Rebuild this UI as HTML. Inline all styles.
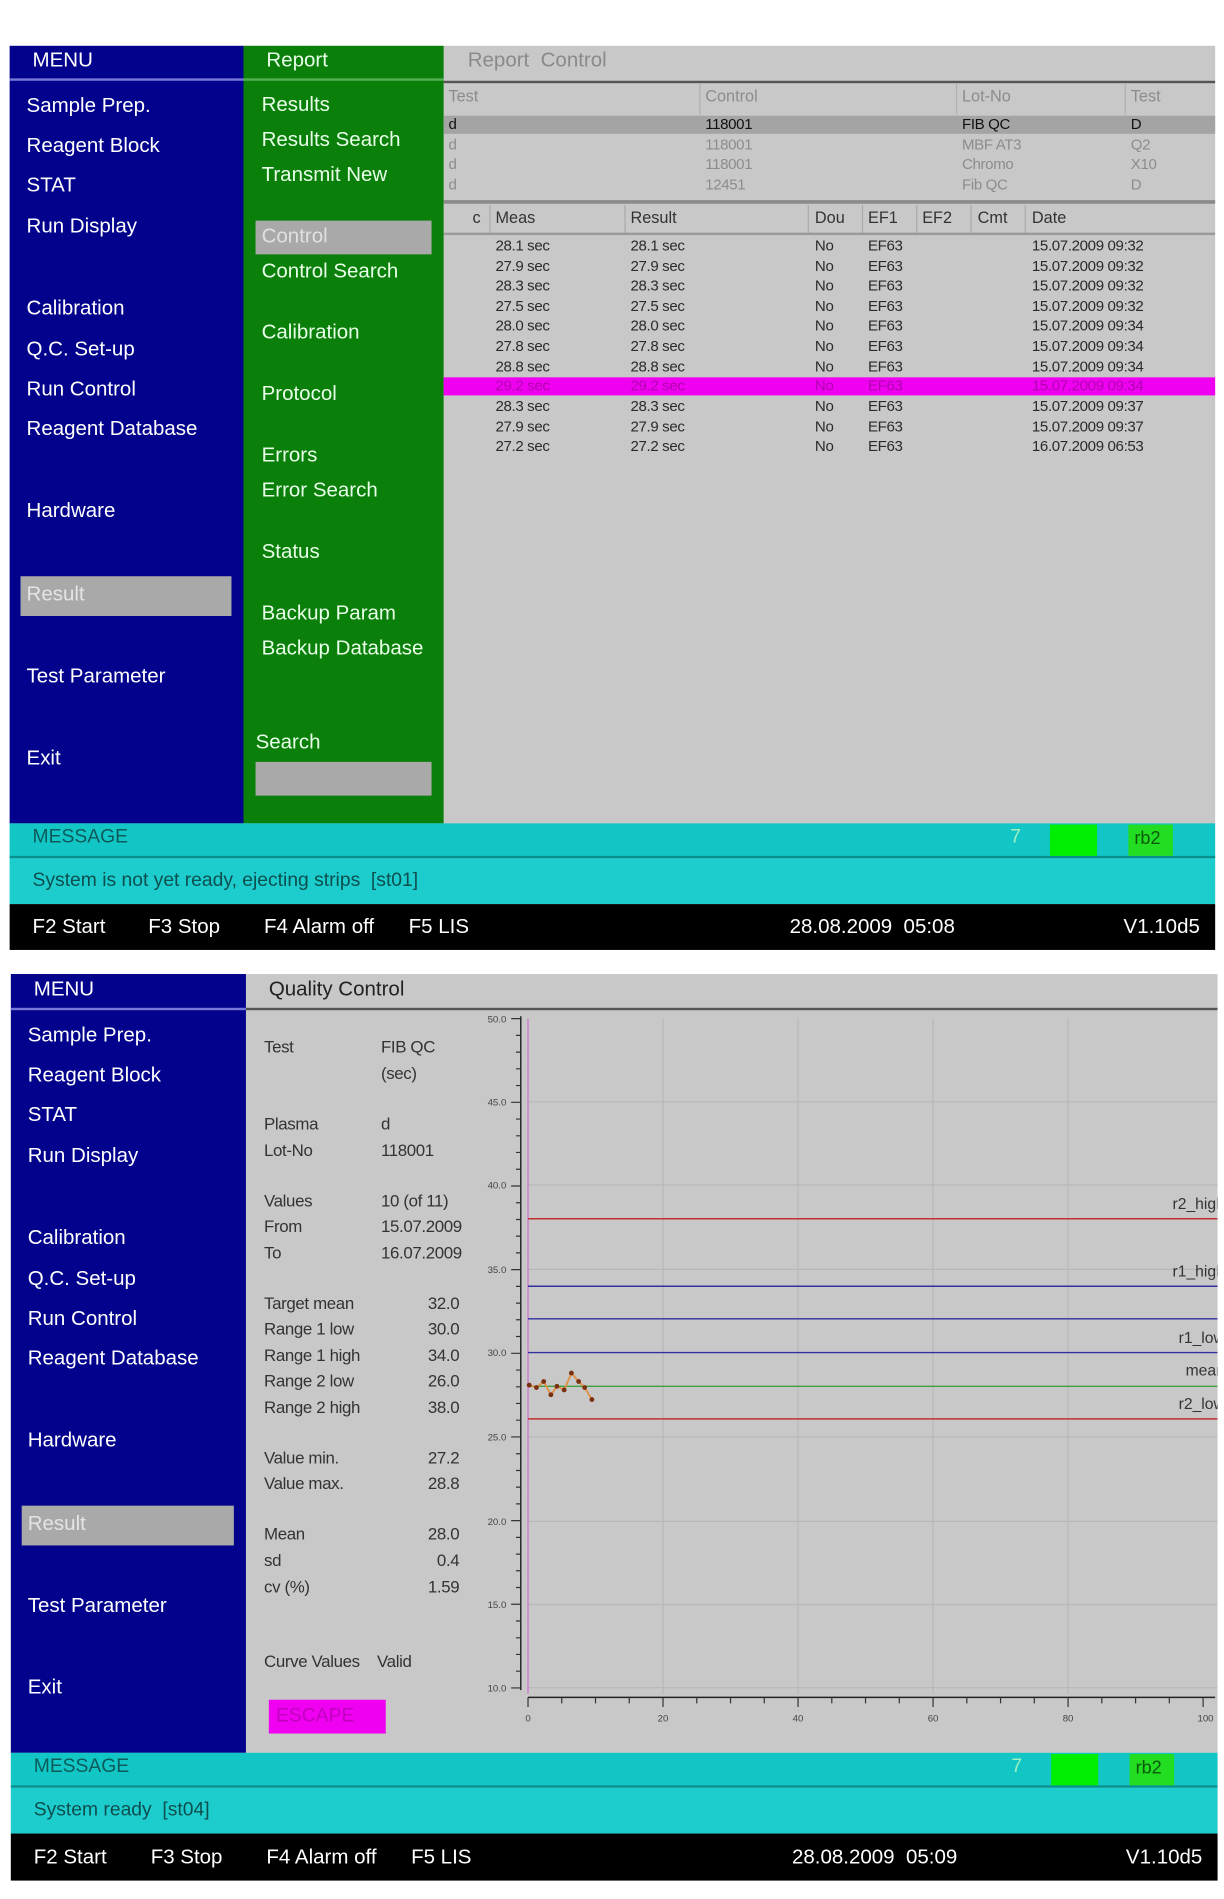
<!DOCTYPE html>
<html><head><meta charset="utf-8">
<style>
html,body{margin:0;padding:0;background:#fff;width:1224px;height:1889px;overflow:hidden}
#w{position:absolute;left:0;top:0;width:1020px;height:1575px;transform:scale(1.2055);transform-origin:0 0;font-family:"Liberation Sans",sans-serif}
.a{position:absolute}
.t{position:absolute;white-space:nowrap;line-height:20px}
.m{font-size:17px;color:#fff}
.g{font-size:17px;color:#e8ffe8}
.s{font-size:12.5px;color:#2a2a2a;line-height:16px;letter-spacing:-0.3px}
.h{font-size:13.5px;color:#333;line-height:16px}
.i{font-size:14px;color:#333;line-height:18px;letter-spacing:-0.3px}
.gr{color:#8c8c8c}
.sel{background:#a9a9a9}
.pk{color:#b000b0 !important}
</style></head><body><div id="w">

<!-- TOP SCREEN -->
<div class="a" style="left:8px;top:38px;width:1000px;height:750px;background:#c8c8c8"></div>
<div class="a" style="left:8px;top:38px;width:194px;height:645px;background:#02028c"></div>
<div class="a" style="left:202px;top:38px;width:166px;height:645px;background:#0a7f0a"></div>
<div class="a" style="left:8px;top:65px;width:194px;height:2px;background:#7878d8"></div>
<div class="a" style="left:202px;top:65px;width:166px;height:2px;background:#52b052"></div>
<div class="a" style="left:368px;top:67px;width:640px;height:2px;background:#555"></div>
<div class="t m" style="left:27px;top:40px">MENU</div>
<div class="t g" style="left:221px;top:40px">Report</div>
<div class="t" style="left:388px;top:40px;font-size:17px;color:#8a8a8a">Report&nbsp; Control</div>

<div class="t m" style="left:22px;top:78px">Sample Prep.</div>
<div class="t m" style="left:22px;top:111px">Reagent Block</div>
<div class="t m" style="left:22px;top:144px">STAT</div>
<div class="t m" style="left:22px;top:178px">Run Display</div>
<div class="t m" style="left:22px;top:246px">Calibration</div>
<div class="t m" style="left:22px;top:280px">Q.C. Set-up</div>
<div class="t m" style="left:22px;top:313px">Run Control</div>
<div class="t m" style="left:22px;top:346px">Reagent Database</div>
<div class="t m" style="left:22px;top:414px">Hardware</div>
<div class="a sel" style="left:17px;top:478px;width:175px;height:33px"></div>
<div class="t m" style="left:22px;top:483px;color:#e4e4e4">Result</div>
<div class="t m" style="left:22px;top:551px">Test Parameter</div>
<div class="t m" style="left:22px;top:619px">Exit</div>

<div class="t g" style="left:217px;top:77px">Results</div>
<div class="t g" style="left:217px;top:106px">Results Search</div>
<div class="t g" style="left:217px;top:135px">Transmit New</div>
<div class="a sel" style="left:212px;top:183px;width:146px;height:28px"></div>
<div class="t g" style="left:217px;top:186px;color:#e0e0e0">Control</div>
<div class="t g" style="left:217px;top:215px">Control Search</div>
<div class="t g" style="left:217px;top:266px">Calibration</div>
<div class="t g" style="left:217px;top:317px">Protocol</div>
<div class="t g" style="left:217px;top:368px">Errors</div>
<div class="t g" style="left:217px;top:397px">Error Search</div>
<div class="t g" style="left:217px;top:448px">Status</div>
<div class="t g" style="left:217px;top:499px">Backup Param</div>
<div class="t g" style="left:217px;top:528px">Backup Database</div>
<div class="t g" style="left:212px;top:606px">Search</div>
<div class="a sel" style="left:212px;top:632px;width:146px;height:28px"></div>

<!-- table 1 -->
<div class="t h gr" style="left:372px;top:72px">Test</div>
<div class="t h gr" style="left:585px;top:72px">Control</div>
<div class="t h gr" style="left:798px;top:72px">Lot-No</div>
<div class="t h gr" style="left:938px;top:72px">Test</div>
<div class="a" style="left:580px;top:69px;width:1px;height:26px;background:#b0b0b0"></div>
<div class="a" style="left:793px;top:69px;width:1px;height:26px;background:#b0b0b0"></div>
<div class="a" style="left:933px;top:69px;width:1px;height:26px;background:#b0b0b0"></div>
<div class="a" style="left:368px;top:96px;width:640px;height:15px;background:#a4a4a4"></div>
<div class="t s" style="left:372px;top:95px;color:#111">d</div><div class="t s" style="left:585px;top:95px;color:#111">118001</div><div class="t s" style="left:798px;top:95px;color:#111">FIB QC</div><div class="t s" style="left:938px;top:95px;color:#111">D</div>
<div class="t s gr" style="left:372px;top:112px">d</div><div class="t s gr" style="left:585px;top:112px">118001</div><div class="t s gr" style="left:798px;top:112px">MBF AT3</div><div class="t s gr" style="left:938px;top:112px">Q2</div>
<div class="t s gr" style="left:372px;top:128px">d</div><div class="t s gr" style="left:585px;top:128px">118001</div><div class="t s gr" style="left:798px;top:128px">Chromo</div><div class="t s gr" style="left:938px;top:128px">X10</div>
<div class="t s gr" style="left:372px;top:145px">d</div><div class="t s gr" style="left:585px;top:145px">12451</div><div class="t s gr" style="left:798px;top:145px">Fib QC</div><div class="t s gr" style="left:938px;top:145px">D</div>
<div class="a" style="left:368px;top:166px;width:640px;height:3px;background:#8a8a8a"></div>
<!-- table 2 -->
<div class="t h" style="left:392px;top:173px">c</div>
<div class="t h" style="left:411px;top:173px">Meas</div>
<div class="t h" style="left:523px;top:173px">Result</div>
<div class="t h" style="left:676px;top:173px">Dou</div>
<div class="t h" style="left:720px;top:173px">EF1</div>
<div class="t h" style="left:765px;top:173px">EF2</div>
<div class="t h" style="left:811px;top:173px">Cmt</div>
<div class="t h" style="left:856px;top:173px">Date</div>
<div class="a" style="left:406px;top:170px;width:1px;height:24px;background:#aaa"></div>
<div class="a" style="left:518px;top:170px;width:1px;height:24px;background:#aaa"></div>
<div class="a" style="left:670px;top:170px;width:1px;height:24px;background:#aaa"></div>
<div class="a" style="left:715px;top:170px;width:1px;height:24px;background:#aaa"></div>
<div class="a" style="left:760px;top:170px;width:1px;height:24px;background:#aaa"></div>
<div class="a" style="left:805px;top:170px;width:1px;height:24px;background:#aaa"></div>
<div class="a" style="left:850px;top:170px;width:1px;height:24px;background:#aaa"></div>
<div class="a" style="left:368px;top:193px;width:640px;height:2px;background:#9a9a9a"></div>
<div class="a" style="left:368px;top:313px;width:640px;height:15px;background:#f000f0"></div>

<!-- message top -->
<div class="a" style="left:8px;top:683px;width:1000px;height:29px;background:#12c6c6"></div>
<div class="a" style="left:8px;top:710px;width:1000px;height:2px;background:#0a8f8f"></div>
<div class="a" style="left:8px;top:712px;width:1000px;height:38px;background:#1dcccc"></div>
<div class="a" style="left:8px;top:750px;width:1000px;height:38px;background:#000"></div>
<div class="t" style="left:27px;top:685px;font-size:16px;color:#0d5a5a">MESSAGE</div>
<div class="t" style="left:838px;top:685px;font-size:16px;color:#9df0c0">7</div>
<div class="a" style="left:871px;top:684px;width:39px;height:26px;background:#00ee00"></div>
<div class="a" style="left:936px;top:684px;width:37px;height:26px;background:#22dd22"></div>
<div class="t" style="left:941px;top:686px;font-size:15px;color:#0a5a0a">rb2</div>
<div class="t" style="left:27px;top:721px;font-size:16px;color:#0d4f4f">System is not yet ready, ejecting strips&nbsp; [st01]</div>
<div class="t" style="left:27px;top:759px;font-size:17px;color:#fff">F2 Start</div>
<div class="t" style="left:123px;top:759px;font-size:17px;color:#fff">F3 Stop</div>
<div class="t" style="left:219px;top:759px;font-size:17px;color:#fff">F4 Alarm off</div>
<div class="t" style="left:339px;top:759px;font-size:17px;color:#fff">F5 LIS</div>
<div class="t" style="left:655px;top:759px;font-size:17px;color:#fff">28.08.2009&nbsp; 05:08</div>
<div class="t" style="left:932px;top:759px;font-size:17px;color:#fff">V1.10d5</div>

<!-- BOTTOM SCREEN -->
<div class="a" style="left:9px;top:808px;width:1001px;height:752px;background:#c8c8c8"></div>
<div class="a" style="left:9px;top:808px;width:195px;height:646px;background:#02028c"></div>
<div class="a" style="left:9px;top:836px;width:195px;height:2px;background:#7878d8"></div>
<div class="a" style="left:204px;top:836px;width:806px;height:2px;background:#555"></div>
<div class="t m" style="left:28px;top:811px">MENU</div>
<div class="t" style="left:223px;top:811px;font-size:17px;color:#222">Quality Control</div>

<div class="t m" style="left:23px;top:849px">Sample Prep.</div>
<div class="t m" style="left:23px;top:882px">Reagent Block</div>
<div class="t m" style="left:23px;top:915px">STAT</div>
<div class="t m" style="left:23px;top:949px">Run Display</div>
<div class="t m" style="left:23px;top:1017px">Calibration</div>
<div class="t m" style="left:23px;top:1051px">Q.C. Set-up</div>
<div class="t m" style="left:23px;top:1084px">Run Control</div>
<div class="t m" style="left:23px;top:1117px">Reagent Database</div>
<div class="t m" style="left:23px;top:1185px">Hardware</div>
<div class="a sel" style="left:18px;top:1249px;width:176px;height:33px"></div>
<div class="t m" style="left:23px;top:1254px;color:#e4e4e4">Result</div>
<div class="t m" style="left:23px;top:1322px">Test Parameter</div>
<div class="t m" style="left:23px;top:1390px">Exit</div>

<div class="t i" style="left:219px;top:859px">Test</div><div class="t i" style="left:316px;top:859px">FIB QC</div>
<div class="t i" style="left:316px;top:881px">(sec)</div>
<div class="t i" style="left:219px;top:923px">Plasma</div><div class="t i" style="left:316px;top:923px">d</div>
<div class="t i" style="left:219px;top:945px">Lot-No</div><div class="t i" style="left:316px;top:945px">118001</div>
<div class="t i" style="left:219px;top:987px">Values</div><div class="t i" style="left:316px;top:987px">10 (of 11)</div>
<div class="t i" style="left:219px;top:1008px">From</div><div class="t i" style="left:316px;top:1008px">15.07.2009</div>
<div class="t i" style="left:219px;top:1030px">To</div><div class="t i" style="left:316px;top:1030px">16.07.2009</div>
<div class="t i" style="left:219px;top:1072px">Target mean</div><div class="t i" style="right:639px;top:1072px">32.0</div>
<div class="t i" style="left:219px;top:1093px">Range 1 low</div><div class="t i" style="right:639px;top:1093px">30.0</div>
<div class="t i" style="left:219px;top:1115px">Range 1 high</div><div class="t i" style="right:639px;top:1115px">34.0</div>
<div class="t i" style="left:219px;top:1136px">Range 2 low</div><div class="t i" style="right:639px;top:1136px">26.0</div>
<div class="t i" style="left:219px;top:1158px">Range 2 high</div><div class="t i" style="right:639px;top:1158px">38.0</div>
<div class="t i" style="left:219px;top:1200px">Value min.</div><div class="t i" style="right:639px;top:1200px">27.2</div>
<div class="t i" style="left:219px;top:1221px">Value max.</div><div class="t i" style="right:639px;top:1221px">28.8</div>
<div class="t i" style="left:219px;top:1263px">Mean</div><div class="t i" style="right:639px;top:1263px">28.0</div>
<div class="t i" style="left:219px;top:1285px">sd</div><div class="t i" style="right:639px;top:1285px">0.4</div>
<div class="t i" style="left:219px;top:1307px">cv (%)</div><div class="t i" style="right:639px;top:1307px">1.59</div>
<div class="t i" style="left:219px;top:1369px">Curve Values&nbsp;&nbsp;&nbsp; Valid</div>
<div class="a" style="left:223px;top:1410px;width:97px;height:28px;background:#f000f0"></div>
<div class="t" style="left:229px;top:1414px;font-size:16px;color:#c000c0">ESCAPE</div>

<svg class="a" style="left:380px;top:838px" width="630" height="616" viewBox="380 838 630 616" font-family="Liberation Sans, sans-serif">
 <g stroke="#b8b8b8" stroke-width="1">
  <line x1="438" y1="914" x2="1010" y2="914"/><line x1="438" y1="983" x2="1010" y2="983"/>
  <line x1="438" y1="1053" x2="1010" y2="1053"/><line x1="438" y1="1192" x2="1010" y2="1192"/>
  <line x1="438" y1="1262" x2="1010" y2="1262"/><line x1="438" y1="1331" x2="1010" y2="1331"/>
  <line x1="438" y1="1400" x2="1010" y2="1400"/>
  <line x1="550" y1="845" x2="550" y2="1405"/><line x1="662" y1="845" x2="662" y2="1405"/>
  <line x1="774" y1="845" x2="774" y2="1405"/><line x1="886" y1="845" x2="886" y2="1405"/>
 </g>
 <line x1="438" y1="845" x2="438" y2="1405" stroke="#d070d0" stroke-width="1"/>
 <line x1="432" y1="843" x2="432" y2="1402" stroke="#222" stroke-width="1.2"/>
 <line x1="438" y1="1408" x2="1008" y2="1408" stroke="#222" stroke-width="1.2"/>
 <path stroke="#333" stroke-width="1" fill="none" d="M424 845h8M428 858.9h4M428 872.8h4M428 886.6h4M428 900.5h4M424 914.4h8M428 928.3h4M428 942.2h4M428 956h4M428 969.9h4M424 983.8h8M428 997.7h4M428 1011.6h4M428 1025.4h4M428 1039.3h4M424 1053.2h8M428 1067.1h4M428 1081h4M428 1094.8h4M428 1108.7h4M424 1122.6h8M428 1136.5h4M428 1150.4h4M428 1164.2h4M428 1178.1h4M424 1192h8M428 1205.9h4M428 1219.8h4M428 1233.6h4M428 1247.5h4M424 1261.4h8M428 1275.3h4M428 1289.2h4M428 1303h4M428 1316.9h4M424 1330.8h8M428 1344.7h4M428 1358.6h4M428 1372.4h4M428 1386.3h4M424 1400.2h8"/>
 <path stroke="#333" stroke-width="1" fill="none" d="M438 1408v8M466 1408v5M494 1408v5M522 1408v5M550 1408v8M578 1408v5M606 1408v5M634 1408v5M662 1408v8M690 1408v5M718 1408v5M746 1408v5M774 1408v8M802 1408v5M830 1408v5M858 1408v5M886 1408v8M914 1408v5M942 1408v5M970 1408v5M998 1408v8"/>
 <g font-size="8" fill="#444" text-anchor="end">
  <text x="420" y="848">50.0</text><text x="420" y="917">45.0</text><text x="420" y="986">40.0</text>
  <text x="420" y="1056">35.0</text><text x="420" y="1125">30.0</text><text x="420" y="1195">25.0</text>
  <text x="420" y="1265">20.0</text><text x="420" y="1334">15.0</text><text x="420" y="1403">10.0</text>
 </g>
 <g font-size="8" fill="#444" text-anchor="middle">
  <text x="438" y="1428">0</text><text x="550" y="1428">20</text><text x="662" y="1428">40</text>
  <text x="774" y="1428">60</text><text x="886" y="1428">80</text><text x="1000" y="1428">100</text>
 </g>
 <line x1="438" y1="1011" x2="1010" y2="1011" stroke="#c03030" stroke-width="1.2"/>
 <line x1="438" y1="1067" x2="1010" y2="1067" stroke="#3030a0" stroke-width="1.2"/>
 <line x1="438" y1="1094" x2="1010" y2="1094" stroke="#3030a0" stroke-width="1.2"/>
 <line x1="438" y1="1122" x2="1010" y2="1122" stroke="#3030a0" stroke-width="1.2"/>
 <line x1="438" y1="1150" x2="1010" y2="1150" stroke="#40a040" stroke-width="1.2"/>
 <line x1="438" y1="1177" x2="1010" y2="1177" stroke="#c03030" stroke-width="1.2"/>
 <g font-size="13" fill="#333" text-anchor="end">
  <text x="1016" y="1003">r2_high</text><text x="1016" y="1059">r1_high</text>
  <text x="1016" y="1114">r1_low</text><text x="1016" y="1141">mean</text><text x="1016" y="1169">r2_low</text>
 </g>
 <polyline points="439,1149 445,1151 451,1146 457,1157 462,1150 468,1153 474,1139 480,1146 485,1151 491,1161" fill="none" stroke="#e09040" stroke-width="1.5"/>
 <g fill="#7a3010">
  <circle cx="439" cy="1149" r="2"/><circle cx="445" cy="1151" r="2"/><circle cx="451" cy="1146" r="2"/>
  <circle cx="457" cy="1157" r="2"/><circle cx="462" cy="1150" r="2"/><circle cx="468" cy="1153" r="2"/>
  <circle cx="474" cy="1139" r="2"/><circle cx="480" cy="1146" r="2"/><circle cx="485" cy="1151" r="2"/>
  <circle cx="491" cy="1161" r="2"/>
 </g>
</svg>

<div class="a" style="left:9px;top:1454px;width:1001px;height:29px;background:#12c6c6"></div>
<div class="a" style="left:9px;top:1481px;width:1001px;height:2px;background:#0a8f8f"></div>
<div class="a" style="left:9px;top:1483px;width:1001px;height:38px;background:#1dcccc"></div>
<div class="a" style="left:9px;top:1521px;width:1001px;height:39px;background:#000"></div>
<div class="t" style="left:28px;top:1456px;font-size:16px;color:#0d5a5a">MESSAGE</div>
<div class="t" style="left:839px;top:1456px;font-size:16px;color:#9df0c0">7</div>
<div class="a" style="left:872px;top:1455px;width:39px;height:26px;background:#00ee00"></div>
<div class="a" style="left:937px;top:1455px;width:37px;height:26px;background:#22dd22"></div>
<div class="t" style="left:942px;top:1457px;font-size:15px;color:#0a5a0a">rb2</div>
<div class="t" style="left:28px;top:1492px;font-size:16px;color:#0d4f4f">System ready&nbsp; [st04]</div>
<div class="t" style="left:28px;top:1531px;font-size:17px;color:#fff">F2 Start</div>
<div class="t" style="left:125px;top:1531px;font-size:17px;color:#fff">F3 Stop</div>
<div class="t" style="left:221px;top:1531px;font-size:17px;color:#fff">F4 Alarm off</div>
<div class="t" style="left:341px;top:1531px;font-size:17px;color:#fff">F5 LIS</div>
<div class="t" style="left:657px;top:1531px;font-size:17px;color:#fff">28.08.2009&nbsp; 05:09</div>
<div class="t" style="left:934px;top:1531px;font-size:17px;color:#fff">V1.10d5</div>

<!-- rows of table 2 -->
<div class="t s" style="left:411px;top:196px">28.1 sec</div><div class="t s" style="left:523px;top:196px">28.1 sec</div><div class="t s" style="left:676px;top:196px">No</div><div class="t s" style="left:720px;top:196px">EF63</div><div class="t s" style="left:856px;top:196px">15.07.2009 09:32</div>
<div class="t s" style="left:411px;top:213px">27.9 sec</div><div class="t s" style="left:523px;top:213px">27.9 sec</div><div class="t s" style="left:676px;top:213px">No</div><div class="t s" style="left:720px;top:213px">EF63</div><div class="t s" style="left:856px;top:213px">15.07.2009 09:32</div>
<div class="t s" style="left:411px;top:229px">28.3 sec</div><div class="t s" style="left:523px;top:229px">28.3 sec</div><div class="t s" style="left:676px;top:229px">No</div><div class="t s" style="left:720px;top:229px">EF63</div><div class="t s" style="left:856px;top:229px">15.07.2009 09:32</div>
<div class="t s" style="left:411px;top:246px">27.5 sec</div><div class="t s" style="left:523px;top:246px">27.5 sec</div><div class="t s" style="left:676px;top:246px">No</div><div class="t s" style="left:720px;top:246px">EF63</div><div class="t s" style="left:856px;top:246px">15.07.2009 09:32</div>
<div class="t s" style="left:411px;top:262px">28.0 sec</div><div class="t s" style="left:523px;top:262px">28.0 sec</div><div class="t s" style="left:676px;top:262px">No</div><div class="t s" style="left:720px;top:262px">EF63</div><div class="t s" style="left:856px;top:262px">15.07.2009 09:34</div>
<div class="t s" style="left:411px;top:279px">27.8 sec</div><div class="t s" style="left:523px;top:279px">27.8 sec</div><div class="t s" style="left:676px;top:279px">No</div><div class="t s" style="left:720px;top:279px">EF63</div><div class="t s" style="left:856px;top:279px">15.07.2009 09:34</div>
<div class="t s" style="left:411px;top:296px">28.8 sec</div><div class="t s" style="left:523px;top:296px">28.8 sec</div><div class="t s" style="left:676px;top:296px">No</div><div class="t s" style="left:720px;top:296px">EF63</div><div class="t s" style="left:856px;top:296px">15.07.2009 09:34</div>
<div class="t s pk" style="left:411px;top:312px">29.2 sec</div><div class="t s pk" style="left:523px;top:312px">29.2 sec</div><div class="t s pk" style="left:676px;top:312px">No</div><div class="t s pk" style="left:720px;top:312px">EF63</div><div class="t s pk" style="left:856px;top:312px">15.07.2009 09:34</div>
<div class="t s" style="left:411px;top:329px">28.3 sec</div><div class="t s" style="left:523px;top:329px">28.3 sec</div><div class="t s" style="left:676px;top:329px">No</div><div class="t s" style="left:720px;top:329px">EF63</div><div class="t s" style="left:856px;top:329px">15.07.2009 09:37</div>
<div class="t s" style="left:411px;top:346px">27.9 sec</div><div class="t s" style="left:523px;top:346px">27.9 sec</div><div class="t s" style="left:676px;top:346px">No</div><div class="t s" style="left:720px;top:346px">EF63</div><div class="t s" style="left:856px;top:346px">15.07.2009 09:37</div>
<div class="t s" style="left:411px;top:362px">27.2 sec</div><div class="t s" style="left:523px;top:362px">27.2 sec</div><div class="t s" style="left:676px;top:362px">No</div><div class="t s" style="left:720px;top:362px">EF63</div><div class="t s" style="left:856px;top:362px">16.07.2009 06:53</div>

</div></body></html>
